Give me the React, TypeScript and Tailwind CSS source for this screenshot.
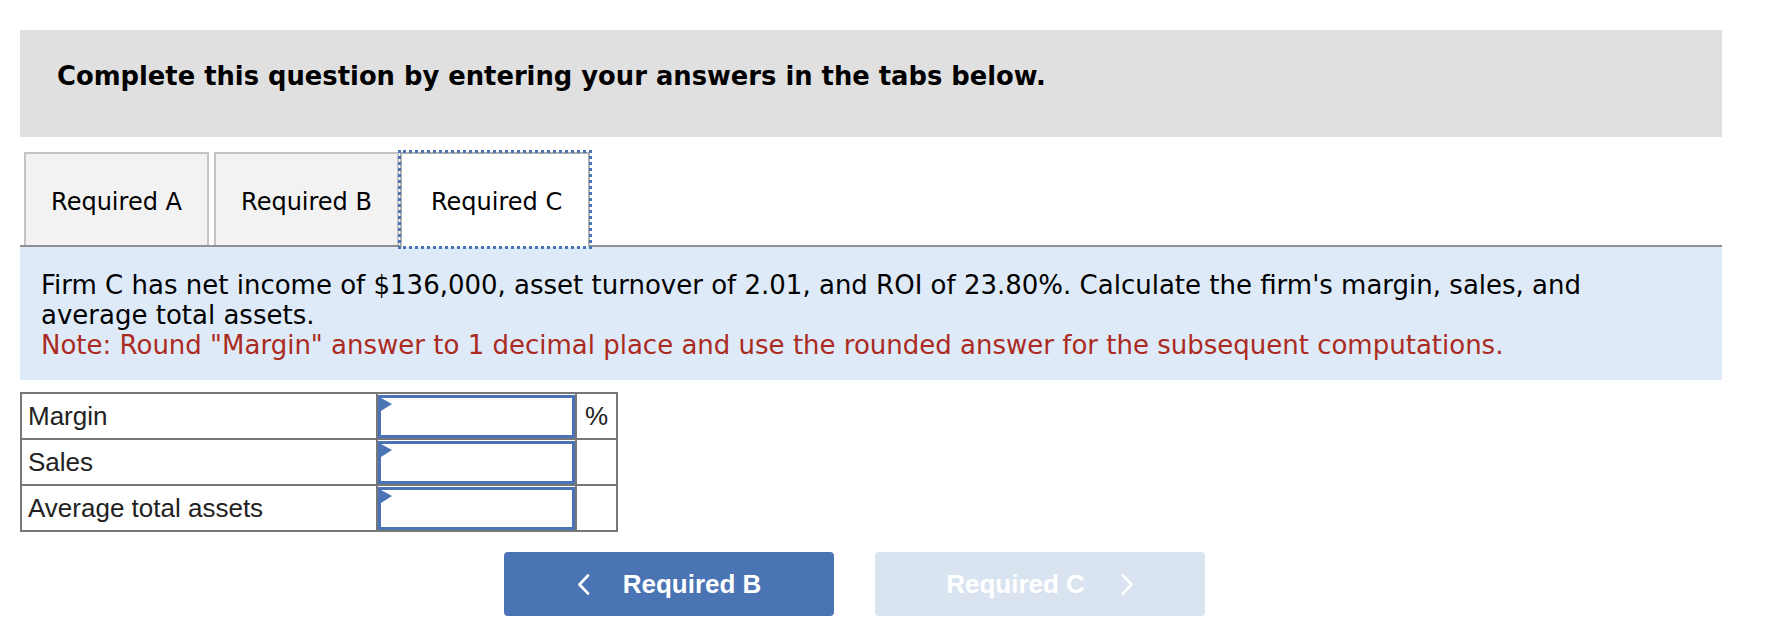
import React from "react";

const verdana = { fontFamily: '"DejaVu Sans", Verdana, sans-serif' };
const arial = { fontFamily: '"Liberation Sans", Arial, Helvetica, sans-serif' };

function Triangle() {
  return (
    <svg className="absolute left-0 top-0" width="11" height="14" viewBox="0 0 11 14">
      <polygon points="0,0 11,6 0,13" fill="#4a74b5" />
    </svg>
  );
}

function InputCell() {
  return (
    <div className="w-[197px] h-full pt-[1px]">
      <div className="relative w-full h-full border-[3px] border-[#4a74b5] bg-white">
        <Triangle />
      </div>
    </div>
  );
}

function Row({ label, unit, first }: { label: string; unit?: string; first?: boolean }) {
  return (
    <div className={`flex ${first ? "h-[44px]" : "h-[46px] border-t-2 border-[#777777]"}`}>
      <div className="w-[354px] flex items-center pl-[6px] text-[26px] text-[#222]" style={arial}>
        {label}
      </div>
      <div className="w-[2px] bg-[#777777]" />
      <InputCell />
      <div className="w-[2px] bg-[#777777]" />
      <div className="flex-1 flex items-center justify-center text-[26px] text-[#222]" style={arial}>
        {unit ?? ""}
      </div>
    </div>
  );
}

function ChevronLeft() {
  return (
    <svg width="13" height="21" viewBox="0 0 13 21" fill="none">
      <polyline points="11,1.5 2.5,10.5 11,19.5" stroke="white" strokeWidth="2.6" strokeLinecap="round" strokeLinejoin="round" />
    </svg>
  );
}

function ChevronRight() {
  return (
    <svg width="13" height="21" viewBox="0 0 13 21" fill="none">
      <polyline points="2,1.5 10.5,10.5 2,19.5" stroke="white" strokeWidth="2.6" strokeLinecap="round" strokeLinejoin="round" />
    </svg>
  );
}

export default function App() {
  return (
    <div className="w-[1768px] h-[644px] bg-white overflow-hidden">
      <div className="ml-[20px] w-[1702px] pt-[30px]">
        <div className="h-[107px] bg-[#e0e0e0] pl-[37px] pt-[31px]">
          <div className="text-[25.8px] leading-[30px] font-bold text-black" style={verdana}>
            Complete this question by entering your answers in the tabs below.
          </div>
        </div>

        <div className="mt-[15px] flex items-end pl-[4px] h-[95px] relative">
          <div className="absolute left-0 right-0 bottom-0 h-[2px] bg-[#919191]" />
          <div className="relative w-[185px] h-[95px] pb-[2px]">
            <div className="h-full border-2 border-b-0 border-[#c4c4c4] bg-[#f2f2f2] text-center pt-[34px] text-[24px] leading-[28px] text-black" style={verdana}>
              Required A
            </div>
          </div>
          <div className="w-[5px]" />
          <div className="relative w-[185px] h-[95px] pb-[2px]">
            <div className="h-full border-2 border-b-0 border-[#c4c4c4] bg-[#f2f2f2] text-center pt-[34px] text-[24px] leading-[28px] text-black" style={verdana}>
              Required B
            </div>
          </div>
          <div className="w-[1px]" />
          <div className="relative w-[190px] h-[95px] border-2 border-b-0 border-[#b0b0b0] bg-white pl-[29px] pt-[34px] text-[24px] leading-[28px] text-black outline-[3px] outline-dotted outline-offset-[-1px] outline-[#4a74b5]" style={verdana}>
            Required C
          </div>
        </div>

        <div className="bg-[#deeaf7] pt-[23px] pb-[20px] pl-[21px] pr-[40px] text-[26px] leading-[30px]" style={verdana}>
          <div className="text-black">
            Firm C has net income of $136,000, asset turnover of 2.01, and ROI of 23.80%. Calculate the firm's margin, sales, and average total assets.
          </div>
          <div className="text-[#ab2a21]">
            Note: Round "Margin" answer to 1 decimal place and use the rounded answer for the subsequent computations.
          </div>
        </div>

        <div className="mt-[12px] w-[598px] border-2 border-[#777777]">
          <Row label="Margin" unit="%" first />
          <Row label="Sales" />
          <Row label="Average total assets" />
        </div>

        <div className="mt-[20px] pl-[484px] flex gap-[41px]">
          <div className="w-[330px] h-[64px] rounded-[4px] bg-[#4a74b4] flex items-center justify-center gap-[33px] text-white font-bold text-[26px]" style={arial}>
            <ChevronLeft />
            <span>Required B</span>
          </div>
          <div className="w-[330px] h-[64px] rounded-[4px] bg-[#dae4f0] flex items-center justify-center gap-[36px] text-white font-bold text-[26px]" style={arial}>
            <span>Required C</span>
            <ChevronRight />
          </div>
        </div>
      </div>
    </div>
  );
}
